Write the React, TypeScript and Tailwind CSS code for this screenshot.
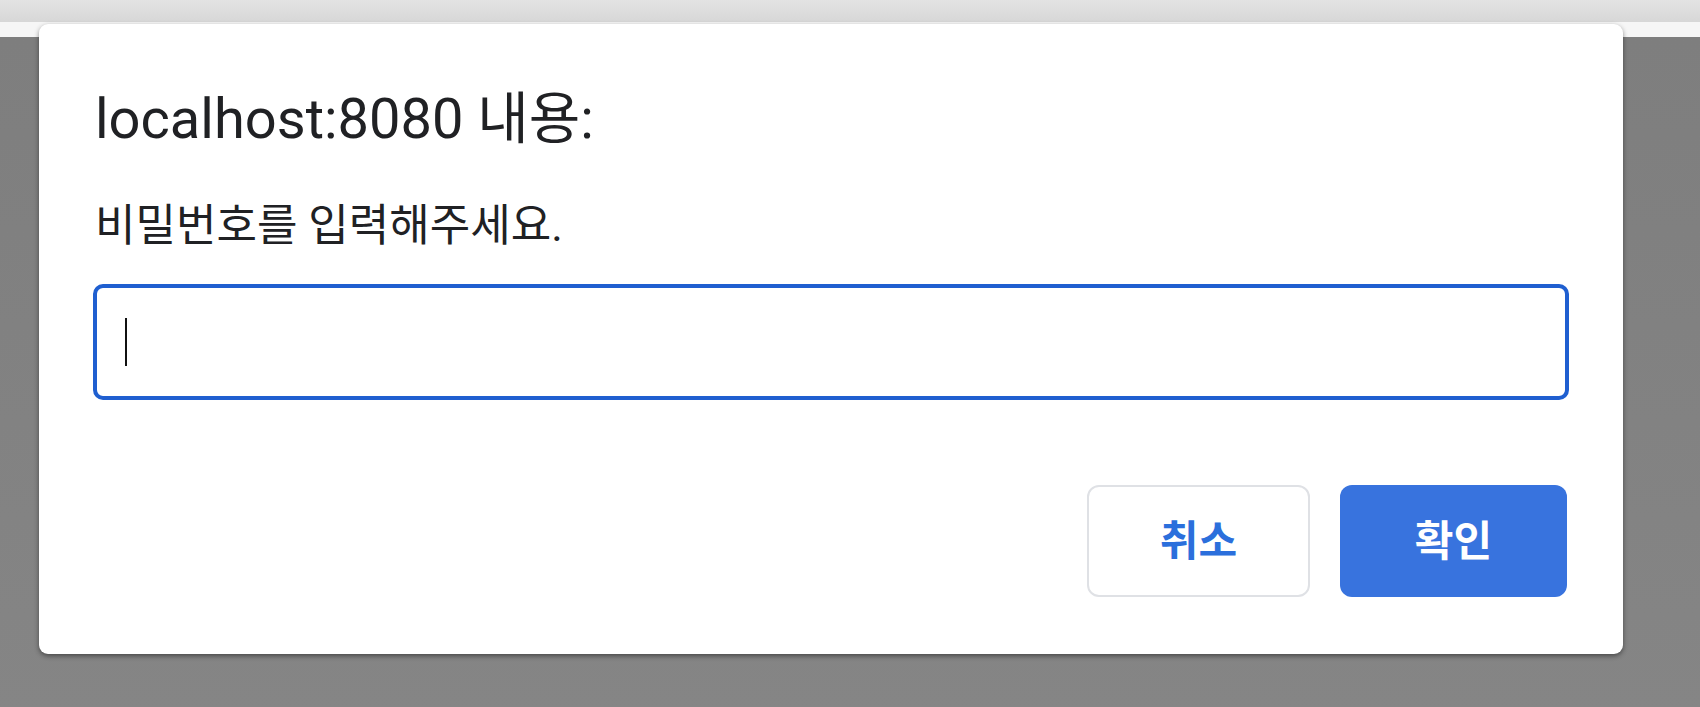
import React from "react";

const FONT = "font-['Roboto','Noto_Sans_CJK_KR',sans-serif]";

export default function App() {
  return (
    <div className={`relative h-[707px] w-full overflow-hidden ${FONT}`}>
      <div className="flex h-full flex-col">
        <div className="h-[22px] bg-gradient-to-b from-[#e3e3e3] to-[#d7d7d7]" />
        <div className="h-[15px] bg-[#f6f6f6]" />
        <div className="flex-1 bg-gradient-to-b from-[#7e7e7e] to-[#858585]" />
      </div>

      <div
        role="dialog"
        className="absolute left-[39px] top-[24px] flex w-[1584px] flex-col rounded-[9px] bg-white px-[54px] pb-[57px] pt-[63px] shadow-[0_2px_5px_rgba(0,0,0,0.45)]"
      >
        <div className="h-[64px] pl-[2px] text-[56px] leading-[64px] text-[#202124]">
          localhost:8080 내용:
        </div>
        <div className="mt-[49px] h-[52px] pl-[2px] text-[44px] leading-[52px] text-[#202124]">
          비밀번호를 입력해주세요.
        </div>
        <div className="mt-[32px] flex h-[116px] items-center rounded-[10px] border-[4px] border-[#1f5fd0] pl-[28px]">
          <div className="h-[48px] w-[2px] bg-[#111]" />
        </div>
        <div className="mt-[85px] flex justify-end gap-[30px] pr-[2px]">
          <button className="flex h-[112px] w-[223px] items-center justify-center rounded-[12px] border-2 border-[#dfe1e5] bg-white text-[42px] font-semibold text-[#2b6fdc]">
            취소
          </button>
          <button className="flex h-[112px] w-[227px] items-center justify-center rounded-[12px] bg-[#3873de] text-[42px] font-bold text-white">
            확인
          </button>
        </div>
      </div>
    </div>
  );
}
